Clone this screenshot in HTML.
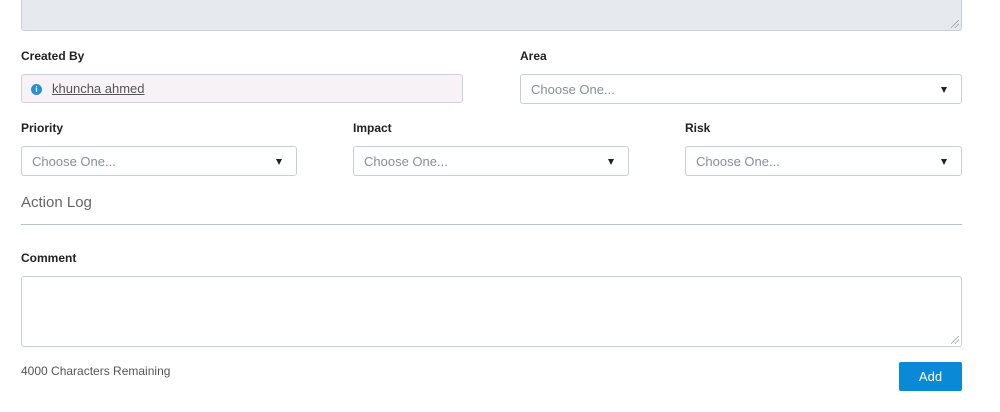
<!DOCTYPE html><html><head><style>
body{margin:0;width:1000px;height:412px;background:#fff;font-family:"Liberation Sans",sans-serif;position:relative;overflow:hidden}
.a{position:absolute;box-sizing:border-box}
.lbl{font-size:12px;font-weight:bold;color:#222}
.sel{border:1px solid #c8d0d6;border-radius:3px;background:#fff;height:30px;font-size:13px;color:#8a8f94;padding:7px 10px}
.sel:after{content:"";position:absolute;right:14px;top:12px;border-left:3.5px solid transparent;border-right:3.5px solid transparent;border-top:6px solid #222}
.grip{position:absolute;right:2px;bottom:2px;width:8px;height:8px;background:linear-gradient(135deg,transparent 45%,#999 45%,#999 52%,transparent 52%,transparent 70%,#999 70%,#999 77%,transparent 77%)}
</style></head><body>
<div class="a" style="left:21px;top:-3px;width:941px;height:34px;background:#e6e9ed;border:1px solid #c8d0d6;border-radius:3px"><div class="grip"></div></div>
<div class="a lbl" style="left:21px;top:49px">Created By</div>
<div class="a" style="left:21px;top:74px;width:442px;height:29px;background:#f7f2f6;border:1px solid #ccd3d8;border-radius:3px;font-size:13px;color:#555;padding:6px 0 0 30px"><span style="text-decoration:underline">khuncha ahmed</span>
<div class="a" style="left:9px;top:9px;width:11px;height:11px;border-radius:50%;background:#2a90d0;color:#fff;font-size:8px;font-weight:bold;text-align:center;line-height:11px">i</div></div>
<div class="a lbl" style="left:520px;top:49px">Area</div>
<div class="a sel" style="left:520px;top:74px;width:442px">Choose One...</div>
<div class="a lbl" style="left:21px;top:121px">Priority</div>
<div class="a lbl" style="left:353px;top:121px">Impact</div>
<div class="a lbl" style="left:685px;top:121px">Risk</div>
<div class="a sel" style="left:21px;top:146px;width:276px">Choose One...</div>
<div class="a sel" style="left:353px;top:146px;width:276px">Choose One...</div>
<div class="a sel" style="left:685px;top:146px;width:277px">Choose One...</div>
<div class="a" style="left:21px;top:194px;font-size:15px;color:#666">Action Log</div>
<div class="a" style="left:21px;top:224px;width:941px;height:1px;background:#b8c2ca"></div>
<div class="a lbl" style="left:21px;top:251px">Comment</div>
<div class="a" style="left:21px;top:276px;width:941px;height:71px;border:1px solid #c8d0d6;border-radius:3px"><div class="grip"></div></div>
<div class="a" style="left:21px;top:364px;font-size:12px;color:#555">4000 Characters Remaining</div>
<div class="a" style="left:899px;top:362px;width:63px;height:29px;background:#0a8ad6;border-radius:2px;color:#fff;font-size:13px;text-align:center;line-height:29px">Add</div>
</body></html>
